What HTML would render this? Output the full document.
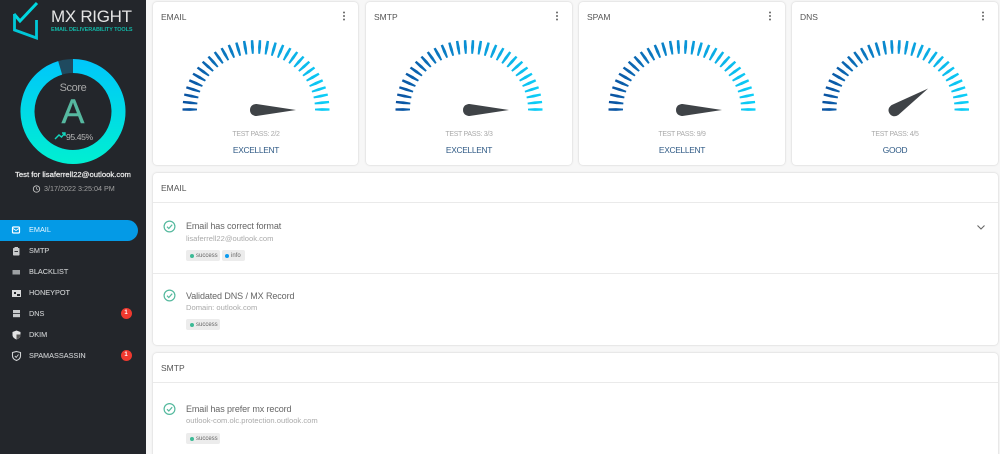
<!DOCTYPE html>
<html><head><meta charset="utf-8">
<style>
*{box-sizing:border-box;margin:0;padding:0}
html,body{width:1000px;height:454px;overflow:hidden;background:#f7f7f7;font-family:"Liberation Sans",sans-serif}
#root{position:absolute;left:0;top:0;width:1000px;height:454px;overflow:hidden;background:#f7f7f7}
.a{position:absolute;white-space:nowrap}
#side{position:absolute;left:0;top:0;width:146px;height:454px;background:#23262b}
.card{position:absolute;top:2px;height:163px;background:#fff;border-radius:4px;box-shadow:0 0 2px rgba(0,0,0,.18)}
.panel{position:absolute;left:153px;width:845px;background:#fff;border-radius:4px;box-shadow:0 0 2px rgba(0,0,0,.18)}
.hl{position:absolute;height:1px;left:153px;width:845px;background:#eaeaea}
.ct{font-size:8.5px;color:#555;line-height:12px}
.tp{font-size:7px;color:#aaa;line-height:10px;text-align:center;width:206px;letter-spacing:-.3px}
.rs{font-size:8.4px;color:#2f5a85;line-height:12px;text-align:center;width:206px;letter-spacing:-.3px}
.ti{left:186px;font-size:9px;color:#666;line-height:12px;letter-spacing:-.1px}
.su{left:186px;font-size:7.6px;color:#aaa;line-height:10px}
.chip{position:absolute;height:11px;background:#ececec;border-radius:2px;font-size:6px;color:#666;line-height:12px;padding-left:10px}
.chip i{position:absolute;left:3.5px;top:3.5px;width:4px;height:4px;border-radius:50%;background:#3dba96}
.nav{position:absolute;left:29px;font-size:7.3px;line-height:10px;color:#c8cacc;-webkit-text-stroke:.12px #c8cacc}
.bd{position:absolute;left:120.5px;width:11px;height:11px;border-radius:50%;background:#f0392f;color:#fff;font-size:6px;font-weight:bold;line-height:11px;text-align:center}
svg{position:absolute}
</style></head><body>
<div id="root">
<div id="side"></div>
<div style="position:absolute;left:0;top:220px;width:138px;height:21px;background:#049ae6;border-radius:0 11px 11px 0"></div>

<svg style="left:0;top:0" width="146" height="454" viewBox="0 0 146 454">
<defs>
<linearGradient id="rg" gradientUnits="userSpaceOnUse" x1="0" y1="59" x2="0" y2="164"><stop offset="0" stop-color="#00c6fb"/><stop offset="1" stop-color="#00efd1"/></linearGradient>
</defs>
<path d="M14 14L20 21L37 3" fill="none" stroke="#00d8e0" stroke-width="3"/>
<path d="M14.5 14V30L36.500 38V20" fill="none" stroke="#00c8d8" stroke-width="2.8"/>
<circle cx="73" cy="111.5" r="45.5" fill="none" stroke="#1f4a5f" stroke-width="14"/>
<path d="M73 66A45.5 45.5 0 1 1 60.15 67.85" fill="none" stroke="url(#rg)" stroke-width="14"/>
<path d="M55 139L59 135L61.5 137L65 133M62 133H65V136" fill="none" stroke="#12d6bd" stroke-width="1.4"/>
<circle cx="36.5" cy="189" r="3.2" fill="none" stroke="#c4c4c4" stroke-width=".9"/>
<path d="M36.5 187V189L38 190" fill="none" stroke="#c4c4c4" stroke-width=".7"/>
<rect x="12.5" y="227" width="7" height="6" rx="1" fill="none" stroke="#fff" stroke-width="1.2"/><path d="M13 228.500L16 230.500L19 228.500" fill="none" stroke="#fff" stroke-width=".9"/>
<rect x="13" y="248" width="6.5" height="7.500" rx=".7" fill="#c8cacc"/><rect x="14.5" y="247" width="3.5" height="2" fill="#c8cacc"/><rect x="14.5" y="251" width="3.5" height=".9" fill="#23262b"/>
<rect x="12.5" y="270" width="7.5" height="4.5" fill="#9ea1a4"/>
<rect x="12" y="290" width="9" height="7" fill="#d8d9da"/><rect x="14" y="292" width="2" height="2" fill="#23262b"/><rect x="17" y="294" width="3" height="2" fill="#23262b"/>
<rect x="13" y="310" width="7" height="3.2" fill="#c8cacc"/><rect x="13" y="314" width="7" height="3.2" fill="#c8cacc"/>
<path d="M16.5 330.5L20.5 332V335C20.5 337 19 338.5 16.5 339.5C14 338.5 12.5 337 12.5 335V332Z" fill="#e2e3e4"/><path d="M16.5 334.5h4v1c-.5 1.500-2 3-4 4z" fill="#555"/>
<path d="M16.500 351.500L20.500 352.500V356C20.500 358 19 359.500 16.500 360.500C14 359.500 12.500 358 12.500 356V352.500Z" fill="none" stroke="#d0d2d4" stroke-width="1.1"/><path d="M14.800 356L16.200 357.400L18.500 354.500" fill="none" stroke="#d0d2d4" stroke-width=".9"/>
</svg>

<div class="a" style="left:51px;top:7.500px;font-size:17px;line-height:18px;color:#e4e4e4;letter-spacing:-.3px">MX RIGHT</div>
<div class="a" style="left:51px;top:26.500px;font-size:5.500px;line-height:7px;font-weight:bold;letter-spacing:-.1px;color:#12b5a5">EMAIL DELIVERABILITY TOOLS</div>
<div class="a" style="left:33px;width:80px;text-align:center;top:81px;font-size:11px;line-height:14px;color:#a8a8a8;letter-spacing:-.4px">Score</div>
<div class="a" style="left:33px;width:80px;text-align:center;top:93px;font-size:34px;line-height:38px;color:#56b8a0;-webkit-text-stroke:.5px #56b8a0">A</div>
<div class="a" style="left:66px;top:132px;font-size:8.600px;line-height:11px;color:#b8b8b8;letter-spacing:-.4px">95.45%</div>
<div class="a" style="left:15px;top:169px;font-size:7.700px;line-height:12px;color:#f0f0f0;-webkit-text-stroke:.2px #f0f0f0">Test for lisaferrell22@outlook.com</div>
<div class="a" style="left:44px;top:184px;font-size:7.200px;line-height:10px;color:#a0a0a0">3/17/2022 3:25:04 PM</div>

<div class="nav" style="top:225px;color:#e8f6ff;-webkit-text-stroke:0">EMAIL</div>
<div class="nav" style="top:246px">SMTP</div>
<div class="nav" style="top:267px">BLACKLIST</div>
<div class="nav" style="top:288px">HONEYPOT</div>
<div class="nav" style="top:309px">DNS</div>
<div class="nav" style="top:329.500px">DKIM</div>
<div class="nav" style="top:350.500px">SPAMASSASSIN</div>
<div class="bd" style="top:308px">1</div>
<div class="bd" style="top:349.500px">1</div>

<div class="card" style="left:153px;width:205px"></div>
<div class="card" style="left:366px;width:206px"></div>
<div class="card" style="left:579px;width:206px"></div>
<div class="card" style="left:792px;width:206px"></div>

<svg style="left:0;top:0" width="1000" height="170" viewBox="0 0 1000 170">
<defs>
<polygon id="t" points="-73.500,-1.200 -66,-1.500 -59,-.9 -59,.9 -66,1.500 -73.500,1.200" fill="#fff"/>
<g id="ticks">
<use href="#t" transform="rotate(0)"/>
<use href="#t" transform="rotate(6.21)"/>
<use href="#t" transform="rotate(12.41)"/>
<use href="#t" transform="rotate(18.62)"/>
<use href="#t" transform="rotate(24.83)"/>
<use href="#t" transform="rotate(31.03)"/>
<use href="#t" transform="rotate(37.24)"/>
<use href="#t" transform="rotate(43.45)"/>
<use href="#t" transform="rotate(49.66)"/>
<use href="#t" transform="rotate(55.86)"/>
<use href="#t" transform="rotate(62.07)"/>
<use href="#t" transform="rotate(68.28)"/>
<use href="#t" transform="rotate(74.48)"/>
<use href="#t" transform="rotate(80.69)"/>
<use href="#t" transform="rotate(86.90)"/>
<use href="#t" transform="rotate(93.10)"/>
<use href="#t" transform="rotate(99.31)"/>
<use href="#t" transform="rotate(105.52)"/>
<use href="#t" transform="rotate(111.72)"/>
<use href="#t" transform="rotate(117.93)"/>
<use href="#t" transform="rotate(124.14)"/>
<use href="#t" transform="rotate(130.34)"/>
<use href="#t" transform="rotate(136.55)"/>
<use href="#t" transform="rotate(142.76)"/>
<use href="#t" transform="rotate(148.97)"/>
<use href="#t" transform="rotate(155.17)"/>
<use href="#t" transform="rotate(161.38)"/>
<use href="#t" transform="rotate(167.59)"/>
<use href="#t" transform="rotate(173.79)"/>
<use href="#t" transform="rotate(180)"/>
</g>
<linearGradient id="tg"><stop offset="0" stop-color="#0a4f9e"/><stop offset=".5" stop-color="#0a92d6"/><stop offset="1" stop-color="#0cd2fa"/></linearGradient>
<mask id="tm" maskUnits="userSpaceOnUse" x="-80" y="-80" width="160" height="90"><g transform="scale(1,.945)"><use href="#ticks"/></g></mask>
<g id="gauge"><rect x="-75" y="-75" width="150" height="80" fill="url(#tg)" mask="url(#tm)"/></g>
<g id="dots" fill="#666"><circle cx="0" cy="0" r="1"/><circle cx="0" cy="3.500" r="1"/><circle cx="0" cy="7" r="1"/></g>
<path id="needle" d="M0 -6C-2 -6 -6.500 -5 -6.500 0C-6.500 5 -2 6 0 6L39.500 0Z" fill="#3f4347"/>
</defs>
<use href="#gauge" x="256" y="109.500"/>
<use href="#gauge" x="469" y="109.500"/>
<use href="#gauge" x="682" y="109.500"/>
<use href="#gauge" x="895.500" y="109.500"/>
<use href="#needle" x="256.500" y="110"/>
<use href="#needle" x="469.500" y="110"/>
<use href="#needle" x="682.500" y="110"/>
<g transform="translate(895,110) rotate(-33)"><use href="#needle"/></g>
<use href="#dots" x="344" y="12.500"/>
<use href="#dots" x="557" y="12.500"/>
<use href="#dots" x="770" y="12.500"/>
<use href="#dots" x="983" y="12.500"/>
</svg>

<div class="a ct" style="left:161px;top:11px">EMAIL</div>
<div class="a ct" style="left:374px;top:11px">SMTP</div>
<div class="a ct" style="left:587px;top:11px">SPAM</div>
<div class="a ct" style="left:800px;top:11px">DNS</div>
<div class="a tp" style="left:153px;top:130px">TEST PASS: 2/2</div>
<div class="a tp" style="left:366px;top:130px">TEST PASS: 3/3</div>
<div class="a tp" style="left:579px;top:130px">TEST PASS: 9/9</div>
<div class="a tp" style="left:792px;top:130px">TEST PASS: 4/5</div>
<div class="a rs" style="left:153px;top:144px">EXCELLENT</div>
<div class="a rs" style="left:366px;top:144px">EXCELLENT</div>
<div class="a rs" style="left:579px;top:144px">EXCELLENT</div>
<div class="a rs" style="left:792px;top:144px">GOOD</div>

<div class="panel" style="top:173px;height:172px"></div>
<div class="panel" style="top:353px;height:110px"></div>
<div class="hl" style="top:202px"></div>
<div class="hl" style="top:273px"></div>
<div class="hl" style="top:382px"></div>
<div class="a ct" style="left:161px;top:182px">EMAIL</div>
<div class="a ct" style="left:161px;top:362px">SMTP</div>

<svg style="left:0;top:170px" width="1000" height="284" viewBox="0 170 1000 284">
<defs><g id="chk" fill="none" stroke="#55b99e"><circle r="5.400" stroke-width="1.200"/><path d="M-2.500 .2L-.7 2L2.700 -1.800" stroke-width="1.200"/></g></defs>
<use href="#chk" x="169.500" y="226.500"/>
<use href="#chk" x="169.500" y="295.500"/>
<use href="#chk" x="169.500" y="409"/>
<path d="M977.500 225.500L981 229L984.500 225.500" fill="none" stroke="#666" stroke-width="1.100"/>
</svg>

<div class="a ti" style="top:220px">Email has correct format</div>
<div class="a su" style="top:233.500px">lisaferrell22@outlook.com</div>
<div class="chip" style="left:186px;top:250px;width:34px"><i></i>success</div>
<div class="chip" style="left:222px;top:250px;width:22.500px;padding-left:9px"><i style="background:#0a9bf0;left:3px"></i>info</div>

<div class="a ti" style="top:289.500px">Validated DNS / MX Record</div>
<div class="a su" style="top:302.500px">Domain: outlook.com</div>
<div class="chip" style="left:186px;top:319px;width:34px"><i></i>success</div>

<div class="a ti" style="top:403px">Email has prefer mx record</div>
<div class="a su" style="top:415.500px">outlook-com.olc.protection.outlook.com</div>
<div class="chip" style="left:186px;top:433px;width:34px"><i></i>success</div>
</div>
</body></html>
